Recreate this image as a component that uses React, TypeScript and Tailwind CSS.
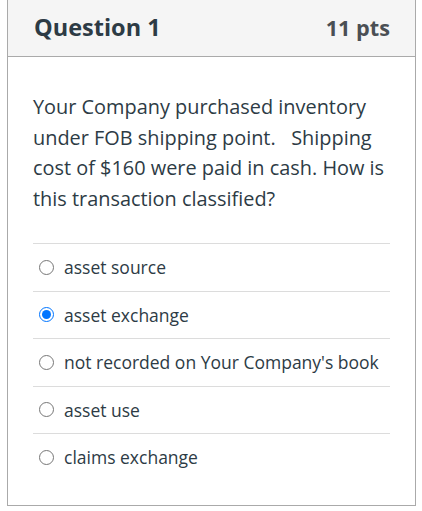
const ANSWERS = [
  { label: "asset source", checked: false },
  { label: "asset exchange", checked: true },
  { label: "not recorded on Your Company's book", checked: false },
  { label: "asset use", checked: false },
  { label: "claims exchange", checked: false },
];

export default function App() {
  return (
    <div className="w-[422px] h-[511px] bg-white font-['Open_Sans',sans-serif]">
      <div className="ml-[7px] w-[409px] border-x border-b border-[#aaaaaa] bg-white">
        {/* Header */}
        <div className="flex h-[57px] items-center justify-between border-b border-[#aaaaaa] bg-[#f5f5f5] pl-[26px] pr-[25px]">
          <h2 className="text-[23.5px] font-bold text-[#2d3b45]">Question 1</h2>
          <span className="text-[21.7px] font-bold text-[#4a4f54]">11 pts</span>
        </div>

        {/* Body */}
        <div className="px-[25px] pt-[35px] pb-[24px]">
          <p className="text-[19.9px] leading-[30.5px] text-[#2d3b45]">
            Your Company purchased inventory under FOB shipping point.&nbsp;&nbsp; Shipping cost of $160 were paid in
            cash. How is this transaction classified?
          </p>

          <div className="mt-[29px]">
            {ANSWERS.map((a) => (
              <label
                key={a.label}
                className="flex h-[47.5px] items-center border-t border-[#dcdcdc] text-[17.5px] text-[#2d3b45]"
              >
                <input
                  type="radio"
                  name="q1"
                  defaultChecked={a.checked}
                  className="ml-[6px] mr-[10px] h-[15px] w-[15px] accent-[#0075ff]"
                />
                <span>{a.label}</span>
              </label>
            ))}
          </div>
        </div>
      </div>
    </div>
  );
}
